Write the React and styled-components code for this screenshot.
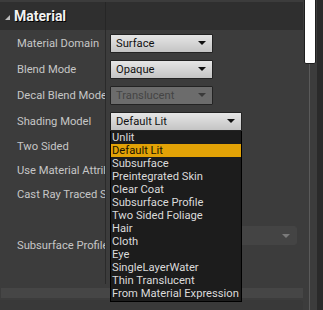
import React from "react";
import styled, { createGlobalStyle } from "styled-components";

const GlobalStyle = createGlobalStyle`
  html, body {
    margin: 0;
    padding: 0;
    background: #3c3c3c;
  }
  body {
    font-family: Roboto, "Liberation Sans", sans-serif;
  }
`;

const shadingModels = [
  "Unlit",
  "Default Lit",
  "Subsurface",
  "Preintegrated Skin",
  "Clear Coat",
  "Subsurface Profile",
  "Two Sided Foliage",
  "Hair",
  "Cloth",
  "Eye",
  "SingleLayerWater",
  "Thin Translucent",
  "From Material Expression",
];

const App = () => {
  return (
    <>
      <GlobalStyle />
      <Panel>
        <Content>
          <Header>
            <HeaderCell>
              <Caret />
              <HeaderTitle>Material</HeaderTitle>
            </HeaderCell>
            <div />
          </Header>

          <Row>
            <Label>Material Domain</Label>
            <Value>
              <Combo width={103}>
                Surface
                <Arrow />
              </Combo>
            </Value>
          </Row>
          <Row>
            <Label>Blend Mode</Label>
            <Value>
              <Combo width={103}>
                Opaque
                <Arrow />
              </Combo>
            </Value>
          </Row>
          <Row>
            <Label>Decal Blend Mode</Label>
            <Value>
              <Combo width={103} disabled>
                Translucent
                <Arrow disabled />
              </Combo>
            </Value>
          </Row>
          <Row>
            <Label>Shading Model</Label>
            <Value>
              <MenuAnchor>
                <Combo width={132}>
                  Default Lit
                  <Arrow />
                </Combo>
                <Menu>
                  {shadingModels.map((m) => (
                    <MenuItem key={m} active={m === "Default Lit"}>
                      {m}
                    </MenuItem>
                  ))}
                </Menu>
              </MenuAnchor>
            </Value>
          </Row>
          <Row short>
            <Label>Two Sided</Label>
            <Value />
          </Row>
          <Row short>
            <Label>Use Material Attributes</Label>
            <Value />
          </Row>
          <Row short>
            <Label>Cast Ray Traced Shadows</Label>
            <Value />
          </Row>
          <TallRow>
            <Label>Subsurface Profile</Label>
            <Value top>
              <Combo width={116} disabled faded>
                None
                <Arrow disabled faded />
              </Combo>
            </Value>
          </TallRow>
          <Spacer />
          <Strip />
          <NextSection />
        </Content>
        <Scrollbar>
          <Thumb />
        </Scrollbar>
        <Edge />
      </Panel>
    </>
  );
};

export default App;

const Panel = styled.div`
  display: flex;
  width: 323px;
  height: 310px;
  overflow: hidden;
  background: #3c3c3c;
`;

const Content = styled.div`
  flex: 1;
  display: flex;
  flex-direction: column;
  min-width: 0;
`;

const Header = styled.div`
  display: grid;
  grid-template-columns: 106px 1fr;
  height: 28px;
  margin-top: 2px;
  background: #2f2f2f;
`;

const HeaderCell = styled.div`
  display: flex;
  align-items: center;
  gap: 4px;
  padding-left: 5px;
  border-right: 1px solid #262626;
`;

const Caret = styled.span`
  width: 0;
  height: 0;
  border-left: 5px solid transparent;
  border-bottom: 5px solid #bdbdbd;
  margin-top: 3px;
`;

const HeaderTitle = styled.span`
  font-size: 14px;
  font-weight: 700;
  color: #f2f2f2;
  text-shadow: 1px 1px 0 #000;
`;

const Row = styled.div`
  display: grid;
  grid-template-columns: 106px 1fr;
  height: ${(p) => (p.short ? 24 : 26)}px;
`;

const TallRow = styled(Row)`
  height: 78px;
`;

const Label = styled.div`
  display: flex;
  align-items: center;
  padding-left: 17px;
  font-size: 11.2px;
  color: #c6c6c6;
  white-space: nowrap;
  overflow: hidden;
  border-right: 1px solid #2a2a2a;
`;

const Value = styled.div`
  display: flex;
  align-items: ${(p) => (p.top ? "flex-start" : "center")};
  justify-content: ${(p) => (p.top ? "flex-end" : "flex-start")};
  padding-left: 4px;
  padding-top: ${(p) => (p.top ? 20 : 0)}px;
  padding-right: ${(p) => (p.top ? 6 : 0)}px;
`;

const MenuAnchor = styled.div`
  position: relative;
`;

const Combo = styled.div`
  display: flex;
  align-items: center;
  justify-content: space-between;
  box-sizing: border-box;
  width: ${(p) => p.width}px;
  height: 19px;
  padding: 0 6px 0 5px;
  font-size: 11.2px;
  color: ${(p) => (p.faded ? "transparent" : p.disabled ? "#444" : "#111")};
  background: ${(p) =>
    p.faded
      ? "#444"
      : p.disabled
      ? "#6c6c6c"
      : "linear-gradient(#e6e6e6, #c4c4c4)"};
  border: 1px solid ${(p) => (p.faded ? "#444" : "#232323")};
  border-radius: ${(p) => (p.faded ? 3 : 1)}px;
  white-space: nowrap;
  overflow: hidden;
`;

const Arrow = styled.span`
  width: 0;
  height: 0;
  border-left: 4px solid transparent;
  border-right: 4px solid transparent;
  border-top: 4px solid
    ${(p) => (p.faded ? "#7a7a7a" : p.disabled ? "#3a3a3a" : "#111")};
`;

const Menu = styled.div`
  position: absolute;
  top: 19px;
  left: 0;
  width: 132px;
  box-sizing: border-box;
  background: #1c1c1c;
  border: 1px solid #000;
  border-top: none;
  padding-bottom: 1px;
  z-index: 10;
`;

const MenuItem = styled.div`
  height: 13px;
  line-height: 13px;
  padding-left: 1px;
  font-size: 11.2px;
  white-space: nowrap;
  color: ${(p) => (p.active ? "#1a1200" : "#dadada")};
  background: ${(p) => (p.active ? "#e2a206" : "transparent")};
`;

const Spacer = styled.div`
  height: 4px;
`;

const Strip = styled.div`
  height: 10px;
  margin-left: 1px;
  background: #464646;
`;

const NextSection = styled.div`
  flex: 1;
  margin-top: 2px;
  background: #393939;
  border-top-right-radius: 3px;
`;

const Scrollbar = styled.div`
  width: 14px;
  flex-shrink: 0;
  display: flex;
  justify-content: center;
  background: linear-gradient(90deg, transparent 6px, #5a5a5a 6px, #5a5a5a 7px, transparent 7px);
`;

const Thumb = styled.div`
  width: 10px;
  height: 64px;
  margin-top: -2px;
  background: #fff;
  border: 1px solid #1e1e1e;
  border-radius: 0 0 2px 2px;
`;

const Edge = styled.div`
  width: 6px;
  flex-shrink: 0;
  background: #2a2a2a;
`;
